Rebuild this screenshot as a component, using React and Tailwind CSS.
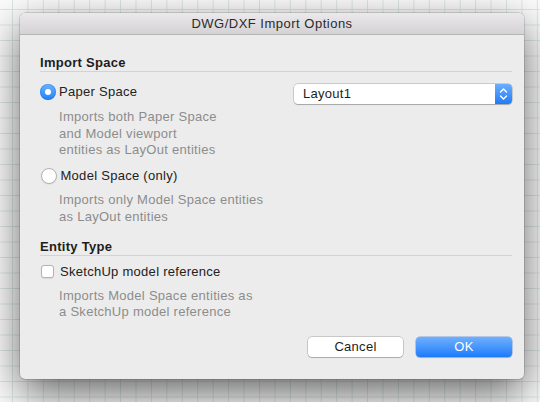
import React from "react";

const font = { fontFamily: '"Liberation Sans", Arial, sans-serif' };

const Radio = ({ checked }) =>
  checked ? (
    <span className="flex h-[16px] w-[16px] shrink-0 items-center justify-center rounded-full bg-gradient-to-b from-[#6db5fb] to-[#1a7ffa] shadow-[inset_0_0_0_1px_rgba(20,100,220,0.35)]">
      <span className="h-[6px] w-[6px] rounded-full bg-white" />
    </span>
  ) : (
    <span className="h-[16px] w-[16px] shrink-0 rounded-full border border-[#b3b3b3] bg-white shadow-[0_0.5px_1px_rgba(0,0,0,0.1)]" />
  );

const Desc = ({ children }) => (
  <div className="pl-[19px] text-[13px] leading-[16.7px] tracking-[0.28px] text-[#8c8c8c]">{children}</div>
);

const Heading = ({ children }) => (
  <div className="h-[17px] border-b border-[#d3d3d3] text-[13px] font-bold leading-[16px] text-[#1d1d1d]">
    {children}
  </div>
);

export default function App() {
  return (
    <div
      style={font}
      className="h-[402px] w-[540px] overflow-hidden bg-[#fbfbfb] bg-[linear-gradient(to_right,#dbe6e6_1px,transparent_1px),linear-gradient(to_bottom,#dbe6e6_1px,transparent_1px)] bg-[size:15.45px_15.5px] bg-[position:12px_9px] pl-[20px] pt-[13px]"
    >
      <div className="flex h-[366px] w-[504px] flex-col overflow-hidden rounded-[5px] bg-[#ececec] shadow-[0_14px_40px_rgba(0,0,0,0.6),0_0_0_0.5px_rgba(0,0,0,0.25)]">
        <div className="flex h-[22px] shrink-0 items-center justify-center border-b border-[#b4b4b4] bg-gradient-to-b from-[#ebe9eb] to-[#d4d2d4] text-[13px] tracking-[0.5px] text-[#2b2b2b]">
          DWG/DXF Import Options
        </div>

        <div className="flex flex-col pl-[20px] pr-[12px] pt-[20px] tracking-[0.28px]">
          <Heading>Import Space</Heading>

          <div className="mt-[12px] flex items-start justify-between">
            <div className="flex flex-col">
              <div className="flex h-[16px] items-center gap-[3px] text-[13px] text-[#222]">
                <Radio checked />
                <span>Paper Space</span>
              </div>
              <div className="mt-[9px]">
                <Desc>
                  Imports both Paper Space
                  <br />
                  and Model viewport
                  <br />
                  entities as LayOut entities
                </Desc>
              </div>
            </div>

            <div className="flex h-[20px] w-[218px] overflow-hidden rounded-[4px] bg-white shadow-[0_0_0_0.5px_rgba(0,0,0,0.28),0_1px_1px_rgba(0,0,0,0.18)]">
              <div className="flex flex-1 items-center pl-[9px] text-[13px] text-[#1d1d1d]">Layout1</div>
              <div className="flex w-[17px] items-center justify-center bg-gradient-to-b from-[#6aaefc] to-[#1c7bfa]">
                <svg width="9" height="14" viewBox="0 0 9 14" fill="none" stroke="white" strokeWidth="1.4" strokeLinecap="round" strokeLinejoin="round">
                  <path d="M1.5 5 L4.5 2 L7.5 5" />
                  <path d="M1.5 9 L4.5 12 L7.5 9" />
                </svg>
              </div>
            </div>
          </div>

          <div className="mt-[9px] flex h-[16px] items-center gap-[4px] pl-[0.5px] text-[13px] text-[#222]">
            <Radio />
            <span>Model Space (only)</span>
          </div>
          <div className="mt-[8px]">
            <Desc>
              Imports only Model Space entities
              <br />
              as LayOut entities
            </Desc>
          </div>

          <div className="mt-[13px]">
            <Heading>Entity Type</Heading>
          </div>

          <div className="mt-[8px] flex h-[16px] items-center gap-[6px] text-[13px] text-[#222]">
            <span className="ml-[1px] h-[13px] w-[13px] rounded-[3px] border border-[#b3b3b3] bg-white shadow-[0_0.5px_1px_rgba(0,0,0,0.08)]" />
            <span>SketchUp model reference</span>
          </div>
          <div className="mt-[8px]">
            <Desc>
              Imports Model Space entities as
              <br />
              a SketchUp model reference
            </Desc>
          </div>

          <div className="mt-[16px] flex justify-end gap-[13px]">
            <button className="h-[20px] w-[95px] rounded-[4px] bg-white text-[13px] text-[#1d1d1d] shadow-[0_0_0_0.5px_rgba(0,0,0,0.3),0_1px_1px_rgba(0,0,0,0.15)]">
              Cancel
            </button>
            <button className="h-[20px] w-[96px] rounded-[4px] bg-gradient-to-b from-[#6db0fd] to-[#1a7afa] text-[13px] text-white shadow-[0_0_0_0.5px_rgba(20,90,210,0.5),0_1px_1px_rgba(0,0,0,0.15)]">
              OK
            </button>
          </div>
        </div>
      </div>
    </div>
  );
}
